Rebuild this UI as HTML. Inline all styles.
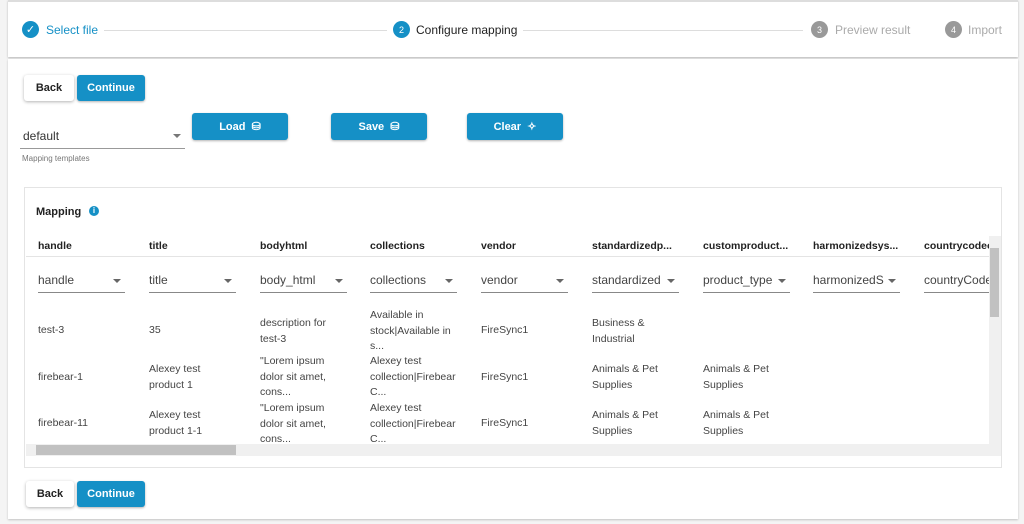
<!DOCTYPE html>
<html><head><style>
*{box-sizing:border-box;margin:0;padding:0}
body{width:1024px;height:524px;background:#f4f4f4;font-family:"Liberation Sans",sans-serif;position:relative;overflow:hidden;color:#333}
.a{position:absolute}
.card{background:#fff}
.btn{position:absolute;background:#1590c6;color:#fff;font-weight:bold;font-size:11px;border-radius:3px;display:flex;align-items:center;justify-content:center;box-shadow:0 1px 2px rgba(0,0,0,.3)}
.wbtn{position:absolute;background:#fff;color:#222;font-weight:bold;font-size:11px;border-radius:3px;display:flex;align-items:center;justify-content:center;box-shadow:0 1px 3px rgba(0,0,0,.3)}
.circ{position:absolute;width:17px;height:17px;border-radius:50%;color:#fff;font-size:9px;display:flex;align-items:center;justify-content:center}
.th{position:absolute;top:240px;font-size:10.5px;font-weight:bold;color:#222}
.sel{position:absolute;top:273px;width:87px;height:20px;border-bottom:1px solid #888;font-size:12px;color:#444;white-space:nowrap}
.sel:after{content:"";position:absolute;right:4px;top:6px;border:4px solid transparent;border-top:4px solid #666}
.td{position:absolute;font-size:10.5px;line-height:15.5px;color:#444;width:105px}
</style></head><body>
<div class="a card" style="left:8px;top:0;width:1010px;height:57px;box-shadow:0 1px 2px rgba(0,0,0,.25);border-top:2px solid #ddd"></div>
<div class="a card" style="left:8px;top:59px;width:1010px;height:460px;box-shadow:0 1px 2px rgba(0,0,0,.2)"></div>
<div class="circ" style="left:22px;top:21px;background:#1590c6;font-size:11px">✓</div>
<div class="a" style="left:46px;top:23px;font-size:12px;color:#1590c6">Select file</div>
<div class="a" style="left:104px;top:30px;width:283px;height:1px;background:#ddd"></div>
<div class="circ" style="left:393px;top:21px;background:#1590c6">2</div>
<div class="a" style="left:416px;top:23px;font-size:12px;color:#222">Configure mapping</div>
<div class="a" style="left:523px;top:30px;width:280px;height:1px;background:#ddd"></div>
<div class="circ" style="left:811px;top:21px;background:#999">3</div>
<div class="a" style="left:835px;top:23px;font-size:12px;color:#aaa">Preview result</div>
<div class="circ" style="left:945px;top:21px;background:#999">4</div>
<div class="a" style="left:968px;top:23px;font-size:12px;color:#aaa">Import</div>
<div class="wbtn" style="left:24px;top:75px;width:50px;height:26px">Back</div>
<div class="btn" style="left:77px;top:75px;width:68px;height:26px">Continue</div>
<div class="a" style="left:23px;top:129px;font-size:12px;color:#333">default</div>
<div class="a" style="left:173px;top:134px;border:4px solid transparent;border-top:4px solid #777"></div>
<div class="a" style="left:20px;top:148px;width:165px;height:1px;background:#999"></div>
<div class="a" style="left:22px;top:154px;font-size:8px;color:#777">Mapping templates</div>
<div class="btn" style="left:192px;top:113px;width:96px;height:27px">Load&nbsp;&nbsp;⛁</div>
<div class="btn" style="left:331px;top:113px;width:96px;height:27px">Save&nbsp;&nbsp;⛁</div>
<div class="btn" style="left:467px;top:113px;width:96px;height:27px">Clear&nbsp;&nbsp;✧</div>
<div class="a" style="left:24px;top:187px;width:978px;height:281px;border:1px solid #e4e4e4;background:#fff"></div>
<div class="a" style="left:36px;top:206px;font-size:11px;font-weight:bold;color:#222">Mapping</div>
<div class="a" style="left:89px;top:206px;width:10px;height:10px;border-radius:50%;background:#1590c6;color:#fff;font-size:8px;text-align:center;line-height:10px;font-weight:bold">i</div>
<div class="a" style="left:26px;top:256px;width:963px;height:1px;background:#e4e4e4"></div>
<div class="th" style="left:38px">handle</div>
<div class="th" style="left:149px">title</div>
<div class="th" style="left:260px">bodyhtml</div>
<div class="th" style="left:370px">collections</div>
<div class="th" style="left:481px">vendor</div>
<div class="th" style="left:592px">standardizedp...</div>
<div class="th" style="left:703px">customproduct...</div>
<div class="th" style="left:813px">harmonizedsys...</div>
<div class="th" style="left:924px;width:65px;overflow:hidden;white-space:nowrap">countrycodeof</div>
<div class="sel" style="left:38px">handle</div>
<div class="sel" style="left:149px">title</div>
<div class="sel" style="left:260px">body_html</div>
<div class="sel" style="left:370px">collections</div>
<div class="sel" style="left:481px">vendor</div>
<div class="sel" style="left:592px">standardized</div>
<div class="sel" style="left:703px;overflow:hidden">product_type</div>
<div class="sel" style="left:813px;overflow:hidden">harmonizedS</div>
<div class="a" style="left:924px;top:273px;width:65px;height:20px;border-bottom:1px solid #888;font-size:12px;color:#444;overflow:hidden;white-space:nowrap">countryCode</div>
<div class="td" style="left:38px;top:323px">test-3</div>
<div class="td" style="left:149px;top:323px">35</div>
<div class="td" style="left:260px;top:316px">description for<br>test-3</div>
<div class="td" style="left:370px;top:308px">Available in<br>stock|Available in<br>s...</div>
<div class="td" style="left:481px;top:323px">FireSync1</div>
<div class="td" style="left:592px;top:316px">Business &amp;<br>Industrial</div>
<div class="td" style="left:38px;top:370px">firebear-1</div>
<div class="td" style="left:149px;top:362px">Alexey test<br>product 1</div>
<div class="td" style="left:260px;top:354px">"Lorem ipsum<br>dolor sit amet,<br>cons...</div>
<div class="td" style="left:370px;top:354px">Alexey test<br>collection|Firebear<br>C...</div>
<div class="td" style="left:481px;top:370px">FireSync1</div>
<div class="td" style="left:592px;top:362px">Animals &amp; Pet<br>Supplies</div>
<div class="td" style="left:703px;top:362px">Animals &amp; Pet<br>Supplies</div>
<div class="td" style="left:38px;top:416px">firebear-11</div>
<div class="td" style="left:149px;top:408px">Alexey test<br>product 1-1</div>
<div class="td" style="left:260px;top:401px">"Lorem ipsum<br>dolor sit amet,<br>cons...</div>
<div class="td" style="left:370px;top:401px">Alexey test<br>collection|Firebear<br>C...</div>
<div class="td" style="left:481px;top:416px">FireSync1</div>
<div class="td" style="left:592px;top:408px">Animals &amp; Pet<br>Supplies</div>
<div class="td" style="left:703px;top:408px">Animals &amp; Pet<br>Supplies</div>
<div class="a" style="left:26px;top:444px;width:963px;height:12px;background:#f0f0f0"></div>
<div class="a" style="left:36px;top:445px;width:200px;height:10px;background:#c1c1c1"></div>
<div class="a" style="left:989px;top:236px;width:12px;height:220px;background:#f0f0f0"></div>
<div class="a" style="left:990px;top:248px;width:9px;height:69px;background:#c1c1c1"></div>
<div class="wbtn" style="left:26px;top:481px;width:48px;height:26px">Back</div>
<div class="btn" style="left:77px;top:481px;width:68px;height:26px">Continue</div>
</body></html>
